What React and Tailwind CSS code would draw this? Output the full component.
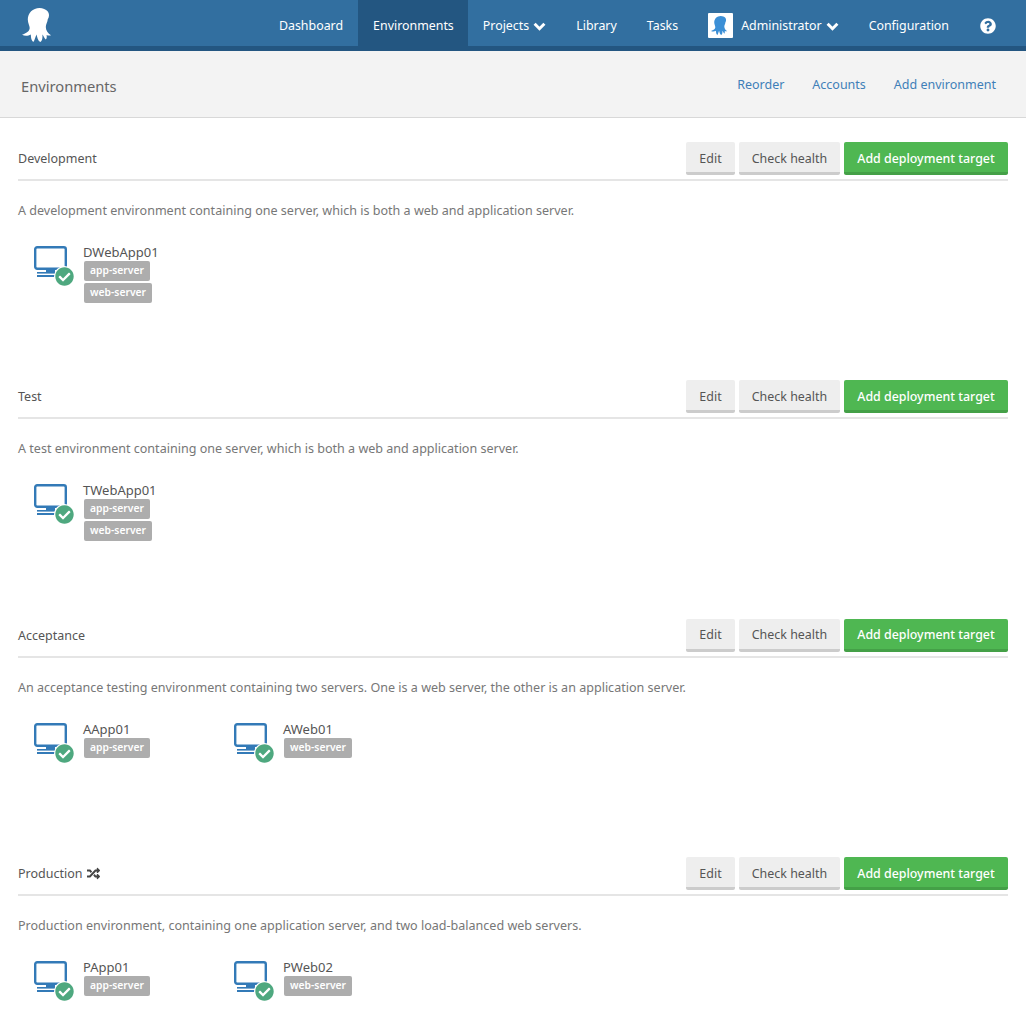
import React from 'react';
import { FaCheckCircle, FaQuestionCircle, FaRandom } from 'react-icons/fa';

const environments = [
    {
        name: 'Development',
        description: 'A development environment containing one server, which is both a web and application server.',
        machines: [{ name: 'DWebApp01', roles: ['app-server', 'web-server'] }],
    },
    {
        name: 'Test',
        description: 'A test environment containing one server, which is both a web and application server.',
        machines: [{ name: 'TWebApp01', roles: ['app-server', 'web-server'] }],
    },
    {
        name: 'Acceptance',
        description: 'An acceptance testing environment containing two servers. One is a web server, the other is an application server.',
        machines: [
            { name: 'AApp01', roles: ['app-server'] },
            { name: 'AWeb01', roles: ['web-server'] },
        ],
    },
    {
        name: 'Production',
        shuffle: true,
        description: 'Production environment, containing one application server, and two load-balanced web servers.',
        machines: [
            { name: 'PApp01', roles: ['app-server'] },
            { name: 'PWeb02', roles: ['web-server'] },
        ],
    },
];

const Octopus = ({ className }) => (
    <svg viewBox="0 0 34 34" className={className} fill="currentColor">
        <path d="M17.5 0C10.8 0 5.8 5 5.8 11.5c0 3.5 1.9 6 1.9 8.600 0 3-3.500 5.600-7.700 6.600 2.800 1.400 6.300 1.200 8.700-.3.500 2-.1 5 2.600 7.600 1.500-1.600 1.900-5.300 3.300-7.600.500 2.600 1.300 6.200 3.600 7.600 2.400-1.400 2.400-5 2.200-7.600 1.400 1.600 2 4 3.400 5.200 1-1.200 1.200-3 .8-4.700 1.400.7 3 .8 4.400.3-3-1.800-5.200-5-5.200-8.300 0-2.600 1.900-5 1.900-7.300C29.700 5 24.200 0 17.500 0z" />
    </svg>
);

const Chevron = () => (
    <svg viewBox="0 0 13 9" className="w-[13px] h-[9px]" fill="none">
        <path d="M1.6 1.800 6.500 6.700 11.400 1.800" stroke="currentColor" strokeWidth="3" />
    </svg>
);

const Monitor = () => (
    <svg viewBox="0 0 33 32" className="w-[33px] h-[32px]" fill="none">
        <rect x="1.2" y="1.2" width="30.6" height="21.6" rx="2" stroke="#337ab7" strokeWidth="2.4" />
        <rect x="12" y="23" width="9" height="3" fill="#337ab7" />
        <rect x="3" y="26" width="18" height="1.6" fill="#337ab7" />
        <rect x="3" y="29" width="18" height="2" fill="#337ab7" />
    </svg>
);

const Machine = ({ machine }) => (
    <div className="w-[200px] flex">
        <div className="relative w-[33px] h-[32px] ml-[16px] mt-[1px]">
            <Monitor />
            <span className="absolute left-[20px] top-[20px] w-[21px] h-[21px] rounded-full bg-white flex items-center justify-center">
                <FaCheckCircle className="text-[#4ea87f] text-[19px]" />
            </span>
        </div>
        <div className="ml-[16px] -mt-[1px]">
            <div className="text-[13px] leading-[17px] text-[#555]">{machine.name}</div>
            <div className="flex flex-col items-start gap-[2px] ml-[1px]">
                {machine.roles.map((role) => (
                    <span key={role} className="h-[20px] px-[6px] rounded-[2px] bg-[#adadad] text-white text-[10.3px] font-semibold leading-[19px]">
                        {role}
                    </span>
                ))}
            </div>
        </div>
    </div>
);

const Environment = ({ env }) => (
    <section className="h-[238.33px]">
        <div className="flex items-start justify-between h-[39px] border-b-2 border-[#e5e5e5]">
            <h3 className="mt-[8px] text-[12.5px] leading-[18px] text-[#555] flex items-center gap-[5px]">
                {env.name}
                {env.shuffle && <FaRandom className="text-[13px] text-[#444]" />}
            </h3>
            <div className="flex gap-[4px]">
                <button className="w-[49px] h-[33px] pt-[4px] rounded-[2px] bg-[#eeeeee] border-b-[3px] border-[#cccccc] text-[12.45px] text-[#555]">Edit</button>
                <button className="w-[101px] h-[33px] pt-[4px] rounded-[2px] bg-[#eeeeee] border-b-[3px] border-[#cccccc] text-[12.45px] text-[#555]">Check health</button>
                <button className="w-[164px] h-[33px] pt-[4px] rounded-[2px] bg-[#4fb752] border-b-[3px] border-[#44a047] text-[12.4px] font-medium text-white">Add deployment target</button>
            </div>
        </div>
        <p className="mt-[21px] text-[12.55px] leading-[18px] text-[#777]">{env.description}</p>
        <div className="flex mt-[25px]">
            {env.machines.map((m) => <Machine key={m.name} machine={m} />)}
        </div>
    </section>
);

export default function App() {
    return (
        <div className="h-[1027px] bg-white font-['Noto_Sans','Open_Sans',sans-serif] overflow-hidden">
            <header className="h-[51px] bg-[#326fa0] border-b-[5px] border-[#235681] flex items-stretch text-white text-[12.4px]">
                <Octopus className="w-[34px] h-[34px] ml-[22px] mt-[8px] text-white" />
                <nav className="ml-auto flex items-stretch">
                    <a className="px-[15px] pt-[7px] flex items-center">Dashboard</a>
                    <a className="pl-[15px] pr-[14px] pt-[7px] flex items-center bg-[#235681]">Environments</a>
                    <a className="px-[15px] pt-[7px] flex items-center gap-[4px]">Projects <Chevron /></a>
                    <a className="px-[15px] pt-[7px] flex items-center">Library</a>
                    <a className="px-[15px] pt-[7px] flex items-center">Tasks</a>
                    <a className="px-[15px] pt-[5px] flex items-center gap-[8px]">
                        <span className="w-[25px] h-[25px] bg-white flex items-center justify-center rounded-[1px]">
                            <Octopus className="w-[19px] h-[19px] text-[#3b8fd6]" />
                        </span>
                        <span className="pt-[2px] flex items-center gap-[4px]">Administrator <Chevron /></span>
                    </a>
                    <a className="pl-[15px] pr-[16px] pt-[7px] flex items-center">Configuration</a>
                    <a className="pl-[15px] pr-[30px] pt-[5px] flex items-center"><FaQuestionCircle className="text-[16px]" /></a>
                </nav>
            </header>

            <div className="h-[67px] bg-[#f3f3f3] border-b border-[#d8d8d8] flex items-center justify-between pl-[21px] pr-[30px]">
                <h1 className="text-[14.7px] text-[#666] mt-[4px]">Environments</h1>
                <div className="flex gap-[28px] text-[12.5px] text-[#3f7fb8] mt-[2px]">
                    <a>Reorder</a>
                    <a>Accounts</a>
                    <a>Add environment</a>
                </div>
            </div>

            <main className="px-[18px] pt-[24px]">
                {environments.map((env) => <Environment key={env.name} env={env} />)}
            </main>
        </div>
    );
}
